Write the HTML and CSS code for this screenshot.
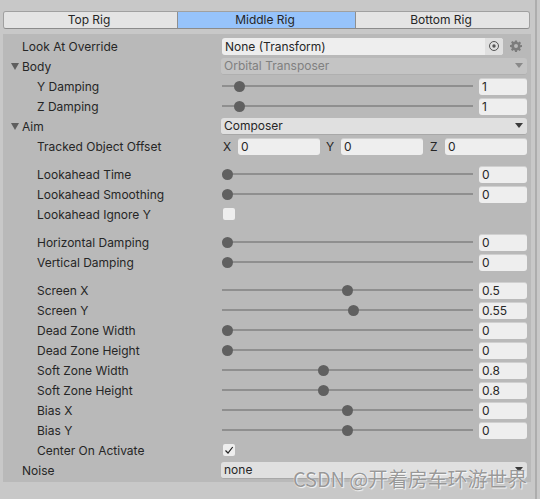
FILE: index.html
```html
<!DOCTYPE html>
<html lang="en">
<head>
  <meta charset="UTF-8">
  <title>Middle Rig</title>
  <link rel="stylesheet" href="styles.css">
</head>
<body>
  <div class="tabs">
    <div class="tab">Top Rig</div>
    <div class="tab active">Middle Rig</div>
    <div class="tab">Bottom Rig</div>
  </div>

  <div class="panel">
    <div class="row">
      <div class="label">Look At Override</div>
      <div class="value">
        <div class="object-field">
          <span class="object-name">None (Transform)</span>
          <span class="picker">
            <svg width="12" height="12" viewBox="0 0 12 12"><circle cx="6" cy="6" r="4.5" fill="none" stroke="#555" stroke-width="1"/><circle cx="6" cy="6" r="1.7" fill="#555"/></svg>
          </span>
        </div>
        <svg class="gear" width="12" height="12" viewBox="0 0 24 24"><path fill="#7c7c7c" fill-rule="evenodd" d="M10 1h4l.6 3.2 2 .8 2.700-1.900 2.800 2.800-1.900 2.700.8 2L24 10v4l-3.200.6-.8 2 1.900 2.700-2.800 2.800-2.700-1.900-2 .8L14 24h-4l-.6-3.200-2-.8-2.700 1.900-2.800-2.800 1.900-2.700-.8-2L0 14v-4l3.200-.6.8-2-1.900-2.700 2.800-2.800 2.700 1.900 2-.8zM12 8a4 4 0 1 0 0 8 4 4 0 0 0 0-8z"/></svg>
      </div>
    </div>

    <div class="row">
      <div class="label"><span class="arrow"></span>Body</div>
      <div class="value"><div class="popup disabled">Orbital Transposer<span class="caret"></span></div></div>
    </div>
    <div class="row">
      <div class="label sub">Y Damping</div>
      <div class="value"><div class="slider"><div class="rail"><div class="thumb" style="left: 5%"></div></div></div><div class="num">1</div></div>
    </div>
    <div class="row">
      <div class="label sub">Z Damping</div>
      <div class="value"><div class="slider"><div class="rail"><div class="thumb" style="left: 5%"></div></div></div><div class="num">1</div></div>
    </div>

    <div class="row">
      <div class="label"><span class="arrow"></span>Aim</div>
      <div class="value"><div class="popup">Composer<span class="caret"></span></div></div>
    </div>
    <div class="row">
      <div class="label sub">Tracked Object Offset</div>
      <div class="value vec">
        <span class="axis">X</span><div class="num">0</div>
        <span class="axis">Y</span><div class="num">0</div>
        <span class="axis axis-last">Z</span><div class="num">0</div>
      </div>
    </div>

    <div class="group">
      <div class="row">
        <div class="label sub">Lookahead Time</div>
        <div class="value"><div class="slider"><div class="rail"><div class="thumb" style="left: 0%"></div></div></div><div class="num">0</div></div>
      </div>
      <div class="row">
        <div class="label sub">Lookahead Smoothing</div>
        <div class="value"><div class="slider"><div class="rail"><div class="thumb" style="left: 0%"></div></div></div><div class="num">0</div></div>
      </div>
      <div class="row">
        <div class="label sub">Lookahead Ignore Y</div>
        <div class="value"><div class="check"></div></div>
      </div>
    </div>

    <div class="group">
      <div class="row">
        <div class="label sub">Horizontal Damping</div>
        <div class="value"><div class="slider"><div class="rail"><div class="thumb" style="left: 0%"></div></div></div><div class="num">0</div></div>
      </div>
      <div class="row">
        <div class="label sub">Vertical Damping</div>
        <div class="value"><div class="slider"><div class="rail"><div class="thumb" style="left: 0%"></div></div></div><div class="num">0</div></div>
      </div>
    </div>

    <div class="group">
      <div class="row">
        <div class="label sub">Screen X</div>
        <div class="value"><div class="slider"><div class="rail"><div class="thumb" style="left: 50%"></div></div></div><div class="num">0.5</div></div>
      </div>
      <div class="row">
        <div class="label sub">Screen Y</div>
        <div class="value"><div class="slider"><div class="rail"><div class="thumb" style="left: 52.5%"></div></div></div><div class="num">0.55</div></div>
      </div>
      <div class="row">
        <div class="label sub">Dead Zone Width</div>
        <div class="value"><div class="slider"><div class="rail"><div class="thumb" style="left: 0%"></div></div></div><div class="num">0</div></div>
      </div>
      <div class="row">
        <div class="label sub">Dead Zone Height</div>
        <div class="value"><div class="slider"><div class="rail"><div class="thumb" style="left: 0%"></div></div></div><div class="num">0</div></div>
      </div>
      <div class="row">
        <div class="label sub">Soft Zone Width</div>
        <div class="value"><div class="slider"><div class="rail"><div class="thumb" style="left: 40%"></div></div></div><div class="num">0.8</div></div>
      </div>
      <div class="row">
        <div class="label sub">Soft Zone Height</div>
        <div class="value"><div class="slider"><div class="rail"><div class="thumb" style="left: 40%"></div></div></div><div class="num">0.8</div></div>
      </div>
      <div class="row">
        <div class="label sub">Bias X</div>
        <div class="value"><div class="slider"><div class="rail"><div class="thumb" style="left: 50%"></div></div></div><div class="num">0</div></div>
      </div>
      <div class="row">
        <div class="label sub">Bias Y</div>
        <div class="value"><div class="slider"><div class="rail"><div class="thumb" style="left: 50%"></div></div></div><div class="num">0</div></div>
      </div>
      <div class="row">
        <div class="label sub">Center On Activate</div>
        <div class="value">
          <div class="check">
            <svg width="10" height="10" viewBox="0 0 10 10"><path d="M1.500 5.500 4 8 8.700 2" fill="none" stroke="#222" stroke-width="1.200"/></svg>
          </div>
        </div>
      </div>
    </div>

    <div class="row">
      <div class="label">Noise</div>
      <div class="value"><div class="popup">none<span class="caret"></span></div></div>
    </div>
  </div>

  <div class="scrollbar"></div>
  <div class="watermark">CSDN @开着房车环游世界</div>
</body>
</html>
```

FILE: styles.css
```css
html, body {
  height: 100%;
}

body {
  margin: 0;
  padding: 11px 0 0 3px;
  box-sizing: border-box;
  background-color: #c8c8c8;
  color: #262626;
  font-family: Inter, "Noto Sans CJK SC", sans-serif;
  font-size: 12px;
  overflow: hidden;
  position: relative;
}

.tabs {
  display: flex;
  width: 527px;
  height: 18px;
  box-sizing: border-box;
  border: 1px solid #a0a0a0;
  border-bottom-color: #8b8b8b;
  border-radius: 3px;
  overflow: hidden;
}

.tab {
  flex: 1 1 0;
  padding-right: 3px;
  background-color: #e4e4e4;
  border-left: 1px solid #8f8f8f;
  text-align: center;
  line-height: 16px;
}

.tab:first-child {
  flex: 0 0 173px;
  box-sizing: border-box;
  border-left: none;
}

.tab.active {
  flex: 0 0 178px;
  box-sizing: border-box;
  background-color: #96c3fb;
}

.panel {
  width: 528px;
  height: 448px;
  margin-top: 5px;
  padding-top: 2px;
  box-sizing: border-box;
  background-color: #b9b9b9;
}

.group {
  margin-top: 8px;
}

.row {
  display: flex;
  align-items: center;
  height: 20px;
}

.label {
  flex: 0 0 218px;
  padding-left: 19px;
  box-sizing: border-box;
  position: relative;
  white-space: nowrap;
}

.label.sub {
  padding-left: 34px;
}

.arrow {
  position: absolute;
  left: 8px;
  top: 4px;
  border-left: 4px solid transparent;
  border-right: 4px solid transparent;
  border-top: 7px solid #5e5e5e;
}

.value {
  flex: 0 0 306px;
  display: flex;
  align-items: center;
}

.object-field {
  display: flex;
  align-items: center;
  width: 281px;
  height: 17px;
  margin-left: 1px;
  background-color: #eeeeee;
  border-radius: 3px;
  overflow: hidden;
}

.object-name {
  flex: 1;
  padding-left: 3px;
}

.picker {
  display: flex;
  align-items: center;
  justify-content: center;
  width: 18px;
  height: 17px;
  background-color: #e0e0e0;
}

.gear {
  margin-left: 7px;
}

.popup {
  flex: 1;
  display: flex;
  align-items: center;
  justify-content: space-between;
  height: 16px;
  padding: 0 4px 0 3px;
  background-color: #e0e0e0;
  border-bottom: 1px solid #a8a8a8;
  border-radius: 3px;
}

.popup.disabled {
  background-color: #c4c4c4;
  border-bottom-color: #b0b0b0;
  color: #808080;
}

.caret {
  border-left: 4px solid transparent;
  border-right: 4px solid transparent;
  border-top: 5px solid #3a3a3a;
}

.popup.disabled .caret {
  border-top-color: #8a8a8a;
}

.slider {
  flex: 0 0 251px;
  height: 2px;
  margin: 0 6px 0 1px;
  background-color: #8f8f8f;
  position: relative;
}

.rail {
  position: absolute;
  left: 5px;
  right: 6px;
  top: 1px;
}

.thumb {
  position: absolute;
  top: -5.500px;
  width: 11px;
  height: 11px;
  margin-left: -5px;
  border-radius: 50%;
  background-color: #606060;
}

.num {
  flex: 1;
  height: 17px;
  padding-left: 3px;
  box-sizing: border-box;
  background-color: #eeeeee;
  border-top: 1px solid #d0d0d0;
  border-radius: 3px;
  line-height: 16px;
}

.vec .axis {
  flex: 0 0 17px;
  padding-left: 2px;
  box-sizing: border-box;
}

.vec .axis-last {
  flex: 0 0 18px;
  padding-left: 3px;
}

.vec .num {
  flex: 0 0 82px;
  margin-right: 4px;
}

.vec .num:last-child {
  margin-right: 0;
}

.check {
  display: flex;
  align-items: center;
  justify-content: center;
  width: 12px;
  height: 12px;
  margin-left: 2px;
  background-color: #eeeeee;
  border-radius: 2px;
}

.scrollbar {
  position: absolute;
  right: 3px;
  top: 0;
  bottom: 0;
  width: 2px;
  background-color: #adadad;
}

.watermark {
  position: absolute;
  left: 293px;
  top: 467px;
  font-family: "Noto Sans CJK SC", sans-serif;
  font-size: 20px;
  line-height: 24px;
  letter-spacing: -0.120px;
  white-space: nowrap;
  color: rgba(120, 120, 120, 0.75);
  text-shadow: 0 0 1px #fff, 1px 1px 1px rgba(255, 255, 255, 0.8);
}
```
